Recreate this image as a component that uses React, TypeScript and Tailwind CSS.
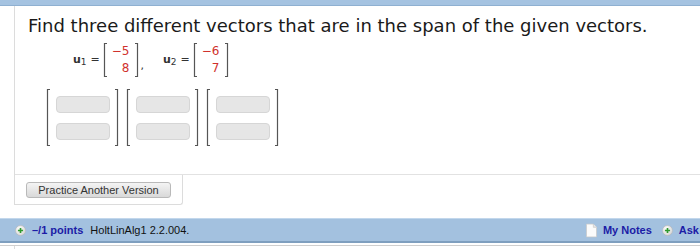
import React from "react"

function PlusCircle() {
  return (
    <svg width="11" height="11" viewBox="0 0 12 12" className="shrink-0">
      <defs>
        <radialGradient id="pg" cx="40%" cy="35%" r="70%">
          <stop offset="0%" stopColor="#ffffff" />
          <stop offset="100%" stopColor="#d4d4d4" />
        </radialGradient>
      </defs>
      <circle cx="6" cy="6" r="5.5" fill="url(#pg)" stroke="#b5b5b5" strokeWidth="0.6" />
      <path d="M6 3.2v5.6M3.2 6h5.6" stroke="#2f9a2f" strokeWidth="1.8" />
    </svg>
  )
}

function DocIcon() {
  return (
    <svg width="11" height="15" viewBox="0 0 12 15" className="shrink-0">
      <path d="M0.5 0.5h7.5l3.5 3.5v10.5h-11z" fill="#fbfbfb" stroke="#c8c8c8" strokeWidth="0.8" />
      <path d="M8 0.5v3.5h3.5" fill="#e8e8e8" stroke="#c8c8c8" strokeWidth="0.8" />
    </svg>
  )
}

// thin bracket with short serifs, like the math renderer draws
function Bracket({ side, h }: { side: "l" | "r"; h: number }) {
  const d =
    side === "l"
      ? `M4 0.5H1.5V${h - 0.5}H4`
      : `M0 0.5H2.5V${h - 0.5}H0`
  return (
    <svg width="4" height={h} viewBox={`0 0 4 ${h}`} className="shrink-0">
      <path d={d} fill="none" stroke="#555" strokeWidth="1.2" />
    </svg>
  )
}

function SmallVec({ top, bottom }: { top: string; bottom: string }) {
  return (
    <div className="flex items-center gap-[5px]">
      <Bracket side="l" h={34} />
      <div className="flex flex-col items-end leading-[17px] text-[12px] text-[#d0312d]">
        <span>{top}</span>
        <span>{bottom}</span>
      </div>
      <Bracket side="r" h={34} />
    </div>
  )
}

function AnswerVec() {
  return (
    <div className="flex items-center">
      <Bracket side="l" h={57} />
      <div className="flex flex-col gap-[10px] px-[5.5px]">
        <div className="w-[54px] h-[17px] rounded-[4px] bg-[#e6e6e6] border border-[#d6d6d6]" />
        <div className="w-[54px] h-[17px] rounded-[4px] bg-[#e6e6e6] border border-[#d6d6d6]" />
      </div>
      <Bracket side="r" h={57} />
    </div>
  )
}

export default function App() {
  return (
    <div className="w-[700px] h-[249px] overflow-hidden bg-white font-['DejaVu_Sans',sans-serif] text-[#222]">
      <div className="h-[6px] bg-[#a5c3e1] border-b border-[#8fb0d1]" />

      <div className="ml-[14px] border-l border-[#dcdcdc]">
        <div className="pl-[13px] pt-[8px]">
          <h1 className="text-[18px] leading-[24px] text-[#1a1a1a]">
            Find three different vectors that are in the span of the given vectors.
          </h1>

          <div className="flex items-center pl-[45px] mt-[5px] text-[11px] text-[#333]">
            <span className="font-bold">
              u<sub className="text-[9px] font-normal">1</sub>
            </span>
            <span className="ml-[4px] mr-[3px]">=</span>
            <SmallVec top="−5" bottom="8" />
            <span className="ml-[2px] mt-[12px]">,</span>
            <span className="font-bold ml-[19px]">
              u<sub className="text-[9px] font-normal">2</sub>
            </span>
            <span className="ml-[4px] mr-[3px]">=</span>
            <SmallVec top="−6" bottom="7" />
          </div>

          <div className="flex gap-[7px] pl-[18px] mt-[12px]">
            <AnswerVec />
            <AnswerVec />
            <AnswerVec />
          </div>
        </div>

        <div className="mt-[28px] border-t border-[#e2e2e2]">
          <div className="w-[168px] h-[30px] border-r border-b border-[#dcdcdc] rounded-br-[3px] flex items-center pl-[11px]">
            <button className="w-[145px] h-[16px] rounded-[3px] border border-[#b9b9b9] bg-gradient-to-b from-[#f4f4f4] to-[#d9d9d9] font-['Liberation_Sans',sans-serif] text-[11px] leading-[14px] text-[#333]">
              Practice Another Version
            </button>
          </div>
        </div>
      </div>

      <div className="mt-[13px] h-[25px] bg-[#a3c1df] border-t border-[#c2d7ec] border-b-2 border-b-[#7f9fbf] flex items-center font-['Liberation_Sans',sans-serif] text-[11px]">
        <div className="pl-[15px] flex items-center gap-[6px]">
          <PlusCircle />
          <span className="font-bold text-[#1c1ca6]">–/1 points</span>
          <span className="ml-[1px] text-[#111]">HoltLinAlg1 2.2.004.</span>
        </div>
        <div className="ml-auto flex items-center pr-[1px]">
          <DocIcon />
          <span className="font-bold text-[#1c1ca6] ml-[6px] mr-[10px]">My Notes</span>
          <PlusCircle />
          <span className="font-bold text-[#1c1ca6] ml-[6px]">Ask</span>
        </div>
      </div>
      <div className="mt-[2px] border-t border-[#cfcfcf]" />
      <div className="ml-[14px] h-[10px] border-l border-[#dcdcdc]" />
    </div>
  )
}
